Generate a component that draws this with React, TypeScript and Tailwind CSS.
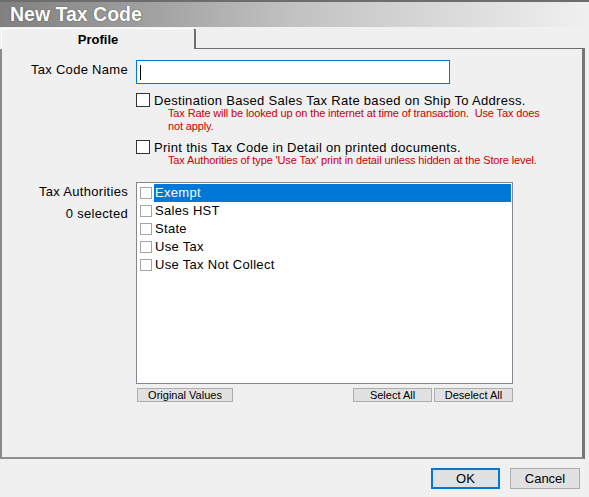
import React from "react";

const Check = ({ gray }: { gray?: boolean }) => (
  <span
    className={
      gray
        ? "inline-block w-[12px] h-[12px] border border-[#a5a5a5] bg-white shrink-0"
        : "inline-block w-[14px] h-[14px] border border-[#333333] bg-white shrink-0"
    }
  />
);

const items = ["Exempt", "Sales HST", "State", "Use Tax", "Use Tax Not Collect"];

export default function App() {
  return (
    <div
      className="w-[589px] h-[497px] bg-[#f0f0f0] overflow-hidden text-black"
      style={{ fontFamily: '"Liberation Sans", Arial, sans-serif' }}
    >
      {/* Title bar */}
      <div className="h-[27px] border-t-2 border-[#6d6d6d] bg-gradient-to-r from-[#808080] via-[#c2c2c2] to-[#f0f0f0] flex items-center pl-[10px]">
        <span
          className="text-white font-bold text-[19.5px] leading-none"
          style={{ textShadow: "0 0 1px #555, 0 0 1px #555" }}
        >
          New Tax Code
        </span>
      </div>
      {/* Tab row */}
      <div className="flex h-[21px] mt-[1px]">
        <div className="w-[195px] ml-[1px] border-l border-t border-white rounded-tl-[3px] rounded-tr-[3px] border-r-2 border-r-[#6e6e6e] flex items-center justify-center">
          <span className="font-bold text-[13px] leading-none mt-[1px]">Profile</span>
        </div>
        <div className="flex-1 border-b border-[#6e6e6e] mr-[4px]" />
      </div>
      {/* Panel */}
      <div className="h-[410px] border-l-2 border-l-[#8a8a8a] border-r-[3px] border-r-[#777777] border-b-2 border-b-[#8f8f8f] mr-[4px] pt-[11px]">
        <div className="grid grid-cols-[126px_1fr] gap-x-2 tracking-[0.3px]">
          <div className="text-right text-[13px] leading-[23px] -mt-[2px]">Tax Code Name</div>
          <div>
            <div className="w-[314px] h-[24px] border border-[#0078d7] bg-white flex items-center pl-[3px]">
              <span className="w-[1px] h-[15px] bg-black" />
            </div>
          </div>

          <div />
          <div className="mt-[9px]">
            <div className="flex items-center gap-[4px]">
              <Check />
              <span className="text-[13px] leading-[13px]">
                Destination Based Sales Tax Rate based on Ship To Address.
              </span>
            </div>
            <div className="ml-[32px] text-[11px] leading-[13px] text-[#c80000] whitespace-nowrap tracking-[-0.13px]">
              Tax Rate will be looked up on the internet at time of transaction.&nbsp; Use Tax does
              <br />
              not apply.
            </div>
          </div>

          <div />
          <div className="mt-[7px]">
            <div className="flex items-center gap-[4px]">
              <Check />
              <span className="text-[13px] leading-[13px]">
                Print this Tax Code in Detail on printed documents.
              </span>
            </div>
            <div className="ml-[32px] text-[11px] leading-[13px] text-[#c80000] whitespace-nowrap tracking-[-0.13px]">
              Tax Authorities of type 'Use Tax' print in detail unless hidden at the Store level.
            </div>
          </div>

          <div className="text-right text-[13px] leading-[15px] mt-[17px]">
            <div>Tax Authorities</div>
            <div className="mt-[7px]">0 selected</div>
          </div>
          <div className="mt-[15px]">
            <div className="w-[377px] h-[202px] border border-[#828790] bg-white pt-[1px] pr-[1px]">
              {items.map((it, i) => (
                <div key={it} className="flex items-center h-[18px]">
                  <span className="ml-[3px] mr-[2px] flex items-center">
                    <Check gray />
                  </span>
                  <span
                    className={
                      i === 0
                        ? "flex-1 h-[18px] bg-[#0078d7] text-white text-[13px] leading-[18px] pl-[1px]"
                        : "flex-1 text-[13px] leading-[18px] pl-[1px]"
                    }
                  >
                    {it}
                  </span>
                </div>
              ))}
            </div>
            <div className="flex w-[377px] mt-[4px] text-[11px] leading-[12px] tracking-normal">
              <div className="w-[96px] h-[14px] ml-[1px] bg-[#e1e1e1] border border-[#adadad] flex items-center justify-center">
                Original Values
              </div>
              <div className="flex-1" />
              <div className="w-[79px] h-[14px] bg-[#e1e1e1] border border-[#adadad] flex items-center justify-center">
                Select All
              </div>
              <div className="w-[79px] h-[14px] ml-[2px] bg-[#e1e1e1] border border-[#adadad] flex items-center justify-center">
                Deselect All
              </div>
            </div>
          </div>
        </div>
      </div>
      {/* Bottom buttons */}
      <div className="flex justify-end mt-[9px] pr-[9px] gap-[10px]">
        <div className="w-[69px] h-[21px] border-2 border-[#0078d7] bg-[#e1e1e1] flex items-center justify-center text-[13px]">
          OK
        </div>
        <div className="w-[70px] h-[21px] border border-[#adadad] bg-[#e1e1e1] flex items-center justify-center text-[13px]">
          Cancel
        </div>
      </div>
    </div>
  );
}
